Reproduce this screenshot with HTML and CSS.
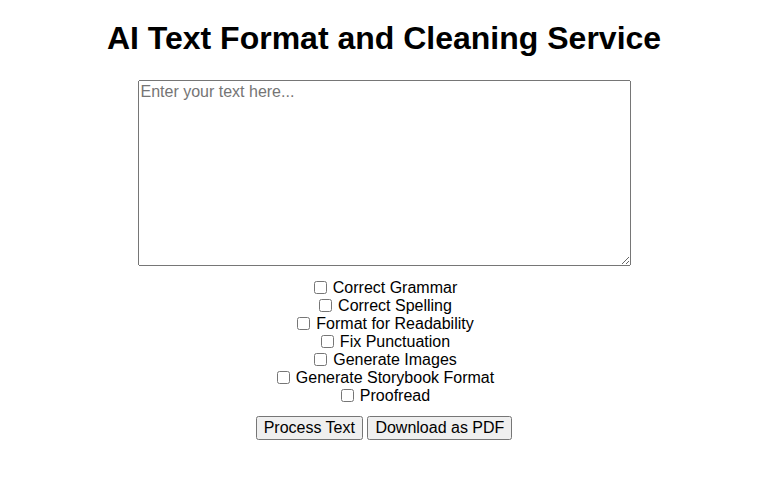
FILE: index.html
```html
<!DOCTYPE html>
<html lang="en">
<head>
    <meta charset="UTF-8">
    <title>AI Text Format and Cleaning Service</title>
    <link rel="stylesheet" href="styles.css">
</head>
<body>
<h1>AI Text Format and Cleaning Service</h1>
<textarea id="inputText" placeholder="Enter your text here..."></textarea>
<div class="options">
    <div><label><input type="checkbox" id="grammar">Correct Grammar</label></div>
    <div><label><input type="checkbox" id="spelling">Correct Spelling</label></div>
    <div><label><input type="checkbox" id="readability">Format for Readability</label></div>
    <div><label><input type="checkbox" id="punctuation">Fix Punctuation</label></div>
    <div><label><input type="checkbox" id="images">Generate Images</label></div>
    <div><label><input type="checkbox" id="storybook">Generate Storybook Format</label></div>
    <div><label><input type="checkbox" id="proofread">Proofread</label></div>
</div>
<div class="actions">
    <button onclick="processText()">Process Text</button>
    <button onclick="downloadPdf()">Download as PDF</button>
</div>

<script>
    function processText() {
        let text = document.getElementById("inputText").value;
        if (document.getElementById("spelling").checked) {
            text = text.replace(/\s+/g, " ");
        }
        if (document.getElementById("punctuation").checked) {
            text = text.replace(/\s+([.,!?])/g, "$1");
        }
        document.getElementById("inputText").value = text.trim();
    }

    function downloadPdf() {
        window.print();
    }
</script>
</body>
</html>
```

FILE: styles.css
```css
body {
    font-family: "Liberation Sans", Arial, sans-serif;
    text-align: center;
}

h1 {
    font-size: 32px;
    margin-top: 12px;
    margin-bottom: 23px;
}

textarea {
    display: block;
    margin: 0 auto;
    width: 487px;
    height: 180px;
    font-family: "Liberation Sans", Arial, sans-serif;
    font-size: 16px;
}

.options {
    margin-top: 13px;
    font-size: 16px;
}

.options div {
    height: 18px;
    line-height: 18px;
}

.options input {
    margin: 0 6px 0 3px;
    vertical-align: -1px;
}

.actions {
    margin-top: 11px;
}

button {
    font-family: "Liberation Sans", Arial, sans-serif;
    font-size: 16px;
}
```
